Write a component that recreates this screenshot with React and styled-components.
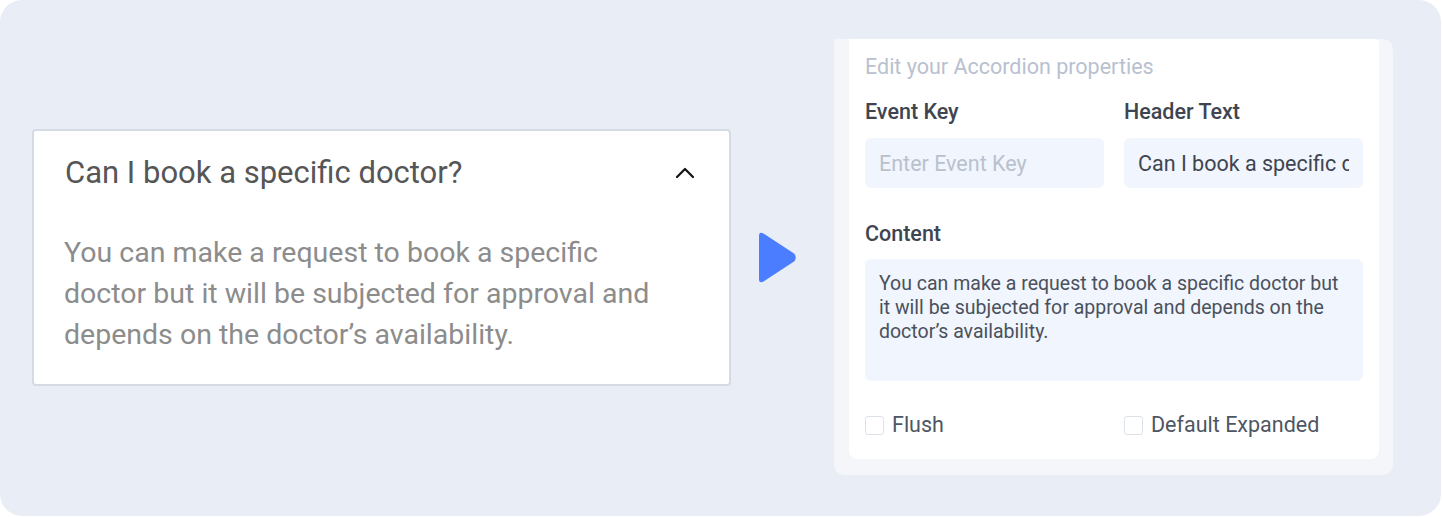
import React from 'react'
import styled, { createGlobalStyle } from 'styled-components'

const GlobalStyle = createGlobalStyle`
  html, body {
    margin: 0;
    padding: 0;
    background: #ffffff;
    font-family: Roboto, "Liberation Sans", sans-serif;
  }
`

const Stage = styled.div`
  width: 1441px;
  height: 516px;
  box-sizing: border-box;
  background: #e9edf5;
  border-radius: 22px;
  display: flex;
  align-items: center;
  padding: 0 0 2px 32px;
`

// Accordion preview
const AccordionCard = styled.div`
  width: 699px;
  box-sizing: border-box;
  background: #ffffff;
  border: 2px solid #d5dbe4;
  border-radius: 4px;
`

const AccordionHeader = styled.div`
  display: flex;
  align-items: center;
  justify-content: space-between;
  padding: 22px 34px 22px 31px;
  font-size: 31px;
  line-height: 40px;
  color: #565656;
`

const AccordionBody = styled.div`
  padding: 17px 44px 29px 30px;
  font-size: 28.5px;
  line-height: 41px;
  color: #8c8c8c;
`

const Chevron = () => (
  <svg width="20" height="14" viewBox="0 0 20 14" fill="none">
    <polyline points="2,11 10,3 18,11" stroke="#111" strokeWidth="2.2" strokeLinecap="round" strokeLinejoin="round" />
  </svg>
)

const ArrowWrap = styled.div`
  margin-left: 26px;
  margin-right: 36px;
  display: flex;
  align-items: center;
`

const PlayArrow = () => (
  <svg width="41" height="55" viewBox="0 0 41 55">
    <path
      d="M2 6 Q2 1 6.5 3.5 L37 23.5 Q40.5 27.5 37 31.5 L6.5 51.5 Q2 54 2 49 Z"
      fill="#4a7dff"
    />
  </svg>
)

// Properties panel
const PanelFrame = styled.div`
  width: 559px;
  box-sizing: border-box;
  background: #f4f6fa;
  border-radius: 0 10px 10px 10px;
  padding: 0 14px 16px 15px;
`

const PanelCard = styled.div`
  background: #ffffff;
  border-radius: 0 4px 8px 8px;
  padding: 16px 16px 22px 16px;
`

const Hint = styled.div`
  font-size: 21.5px;
  line-height: 24px;
  color: #b9c1cf;
`

const Grid = styled.div`
  display: grid;
  grid-template-columns: 1fr 1fr;
  column-gap: 20px;
  margin-top: ${p => p.$top || 0}px;
`

const Field = styled.div`
  display: flex;
  flex-direction: column;
  gap: 14px;
  min-width: 0;
`

const Label = styled.div`
  font-size: 21.5px;
  line-height: 24px;
  font-weight: 500;
  color: #3e4550;
`

const Input = styled.div`
  height: 50px;
  box-sizing: border-box;
  background: #f1f5fd;
  border-radius: 6px;
  padding: 0 14px;
  display: flex;
  align-items: center;
  font-size: 21.5px;
  color: ${p => (p.$placeholder ? '#b9c1ce' : '#3e4550')};
`

const InputText = styled.span`
  flex: 1;
  min-width: 0;
  white-space: nowrap;
  overflow: hidden;
`

const ContentBlock = styled.div`
  margin-top: 34px;
  display: flex;
  flex-direction: column;
  gap: 13px;
`

const TextArea = styled.div`
  height: 122px;
  box-sizing: border-box;
  background: #f1f5fd;
  border-radius: 6px;
  padding: 13px 14px;
  font-size: 19.5px;
  line-height: 24px;
  color: #4a515c;
`

const CheckRow = styled.label`
  display: flex;
  align-items: center;
  gap: 8px;
  font-size: 21.5px;
  line-height: 24px;
  color: #4e5663;
`

const Box = styled.span`
  width: 19px;
  height: 19px;
  box-sizing: border-box;
  border: 1.5px solid #dce2ea;
  border-radius: 3px;
  background: #ffffff;
`

const answer =
  'You can make a request to book a specific doctor but it will be subjected for approval and depends on the doctor\u2019s availability.'

export default function App() {
  return (
    <>
      <GlobalStyle />
      <Stage>
        <AccordionCard>
          <AccordionHeader>
            <span>Can I book a specific doctor?</span>
            <Chevron />
          </AccordionHeader>
          <AccordionBody>{answer}</AccordionBody>
        </AccordionCard>

        <ArrowWrap>
          <PlayArrow />
        </ArrowWrap>

        <PanelFrame>
          <PanelCard>
            <Hint>Edit your Accordion properties</Hint>
            <Grid $top={21}>
              <Field>
                <Label>Event Key</Label>
                <Input $placeholder>
                  <InputText>Enter Event Key</InputText>
                </Input>
              </Field>
              <Field>
                <Label>Header Text</Label>
                <Input>
                  <InputText>Can I book a specific doctor?</InputText>
                </Input>
              </Field>
            </Grid>
            <ContentBlock>
              <Label>Content</Label>
              <TextArea>{answer}</TextArea>
            </ContentBlock>
            <Grid $top={32}>
              <CheckRow>
                <Box />
                Flush
              </CheckRow>
              <CheckRow>
                <Box />
                Default Expanded
              </CheckRow>
            </Grid>
          </PanelCard>
        </PanelFrame>
      </Stage>
    </>
  )
}
